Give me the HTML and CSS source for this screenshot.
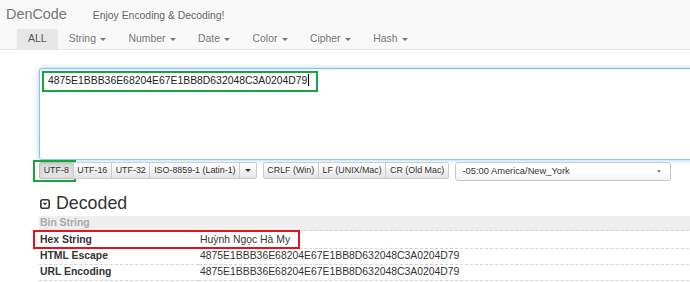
FILE: index.html
```html
<!DOCTYPE html>
<html lang="en">
<head>
  <meta charset="UTF-8">
  <title>DenCode</title>
  <link rel="stylesheet" href="styles.css">
</head>
<body>
  <header class="navbar">
    <div class="brand-row">
      <span class="brand">DenCode</span>
      <span class="tagline">Enjoy Encoding &amp; Decoding!</span>
    </div>
    <ul class="nav">
      <li class="active"><a>ALL</a></li>
      <li><a>String <span class="caret"></span></a></li>
      <li><a>Number <span class="caret"></span></a></li>
      <li><a>Date <span class="caret"></span></a></li>
      <li><a>Color <span class="caret"></span></a></li>
      <li><a>Cipher <span class="caret"></span></a></li>
      <li><a>Hash <span class="caret"></span></a></li>
    </ul>
  </header>

  <main class="content">
    <div class="input-box">
      <span class="mark-text">4875E1BBB36E68204E67E1BB8D632048C3A0204D79<span class="cursor"></span></span>
    </div>

    <div class="toolbar">
      <div class="btn-group">
        <button class="btn active marked">UTF-8</button>
        <button class="btn">UTF-16</button>
        <button class="btn">UTF-32</button>
        <button class="btn">ISO-8859-1 (Latin-1)</button>
        <button class="btn"><span class="caret"></span></button>
      </div>
      <div class="btn-group">
        <button class="btn">CRLF (Win)</button>
        <button class="btn">LF (UNIX/Mac)</button>
        <button class="btn">CR (Old Mac)</button>
      </div>
      <div class="tz-select">
        <span>-05:00 America/New_York</span>
        <span class="select-arrow"></span>
      </div>
    </div>

    <h3 class="section-title">
      <svg class="collapse-icon" width="10" height="10" viewBox="0 0 10 10">
        <rect x="0.8" y="0.8" width="8.4" height="8.4" rx="2" fill="none" stroke="#333" stroke-width="1.6"/>
        <path d="M2.8 3.8 L7.2 3.8 L5 6.6 Z" fill="#333"/>
      </svg>
      Decoded
    </h3>

    <table class="results">
      <tr class="row-dim">
        <th>Bin String</th>
        <td></td>
      </tr>
      <tr class="row-marked">
        <th>Hex String</th>
        <td>Huỳnh Ngọc Hà My</td>
      </tr>
      <tr>
        <th>HTML Escape</th>
        <td>4875E1BBB36E68204E67E1BB8D632048C3A0204D79</td>
      </tr>
      <tr>
        <th>URL Encoding</th>
        <td>4875E1BBB36E68204E67E1BB8D632048C3A0204D79</td>
      </tr>
    </table>
  </main>
</body>
</html>
```

FILE: styles.css
```css
html, body {
  margin: 0;
  overflow: hidden;
}

body {
  font-family: "Liberation Sans", Arial, sans-serif;
  font-size: 10.4px;
  line-height: 14.8px;
  color: #333;
  background: #fff;
}

/* top bar */

.navbar {
  background: #f8f8f8;
  border-bottom: 1px solid #e7e7e7;
  height: 49px;
}

.brand-row {
  display: flex;
  align-items: baseline;
  height: 29px;
  padding: 4px 0 0 6px;
  box-sizing: border-box;
}

.brand {
  font-size: 14.4px;
  line-height: 20px;
  color: #777;
}

.tagline {
  margin-left: 26px;
  color: #666;
}

.nav {
  display: flex;
  list-style: none;
  margin: 0 0 0 17px;
  padding: 0;
}

.nav a {
  display: block;
  padding: 0 11.1px;
  line-height: 20px;
  color: #777;
}

.nav .active a {
  background: #e7e7e7;
  color: #555;
}

.caret {
  display: inline-block;
  width: 0;
  height: 0;
  margin-left: 1.5px;
  vertical-align: middle;
  border-top: 3px solid;
  border-left: 3px solid transparent;
  border-right: 3px solid transparent;
}

/* page */

.content {
  padding: 18px 0 0 39px;
  width: 720px;
}

.input-box {
  height: 86px;
  padding: 2px;
  background: #fff;
  border: 1px solid #8ec2ee;
  border-radius: 3px;
  box-shadow: inset 0 1px 1px rgba(0, 0, 0, .075), 0 0 5px rgba(102, 175, 233, .6);
}

.mark-text {
  display: inline-block;
  padding: 1px 7px 1px 4px;
  border: 2px solid #12a83c;
  line-height: 14.8px;
  color: #222;
}

.cursor {
  display: inline-block;
  width: 1px;
  height: 12px;
  margin-left: 1px;
  vertical-align: -2px;
  background: #000;
}

.toolbar {
  display: flex;
  align-items: flex-start;
  gap: 6px;
  margin-top: 2px;
}

.btn-group {
  display: flex;
}

.btn {
  position: relative;
  margin: 0 0 0 -1px;
  padding: 0.75px 3.7px;
  font-family: inherit;
  font-size: 8.9px;
  line-height: 13.3px;
  color: #333;
  background: linear-gradient(#fff, #e4e4e4);
  border: 1px solid #ccc;
  border-radius: 0;
}

.btn:first-child {
  margin-left: 0;
  border-radius: 2px 0 0 2px;
}

.btn:last-child {
  border-radius: 0 2px 2px 0;
}

.btn.active {
  background: #e2e2e2;
  border-color: #bdbdbd;
  box-shadow: inset 0 2px 4px rgba(0, 0, 0, .12);
}

.btn .caret {
  margin: 0 1px;
  color: #333;
}

/* annotation around the selected charset */
.btn.marked::after {
  content: "";
  position: absolute;
  left: -7px;
  right: -3px;
  top: -3px;
  bottom: -4px;
  border: 2px solid #12a83c;
}

.tz-select {
  display: flex;
  align-items: center;
  justify-content: space-between;
  width: 216px;
  height: 19px;
  margin-left: -0.5px;
  padding: 0 9px 0 7px;
  box-sizing: border-box;
  font-size: 9.3px;
  border: 1px solid #c8c8c8;
  border-radius: 3px;
  background: linear-gradient(#fff 50%, #f2f2f2);
}

.select-arrow {
  width: 0;
  height: 0;
  border-top: 3px solid #888;
  border-left: 2.5px solid transparent;
  border-right: 2.5px solid transparent;
}

.section-title {
  display: flex;
  align-items: center;
  gap: 6px;
  margin: 13px 0 2px 1px;
  font-size: 17.8px;
  font-weight: normal;
  line-height: 19.6px;
}

.collapse-icon {
  margin-top: 1px;
}

/* result table */

.results {
  width: 660px;
  border-collapse: collapse;
}

.results th,
.results td {
  padding: 0 1px;
  text-align: left;
  line-height: 14.8px;
  white-space: nowrap;
  border-bottom: 1px dashed #d4d4d4;
}

.results th {
  width: 158px;
  font-weight: bold;
}

.row-dim th,
.row-dim td {
  background: #eee;
  color: #aaa;
}

.row-marked th,
.row-marked td {
  padding-top: 2px;
}

.row-marked th {
  position: relative;
}

/* annotation around the hex string row */
.row-marked th::after {
  content: "";
  position: absolute;
  left: -6px;
  top: -1px;
  width: 263px;
  height: 15px;
  border: 2px solid #e3121b;
}
```
